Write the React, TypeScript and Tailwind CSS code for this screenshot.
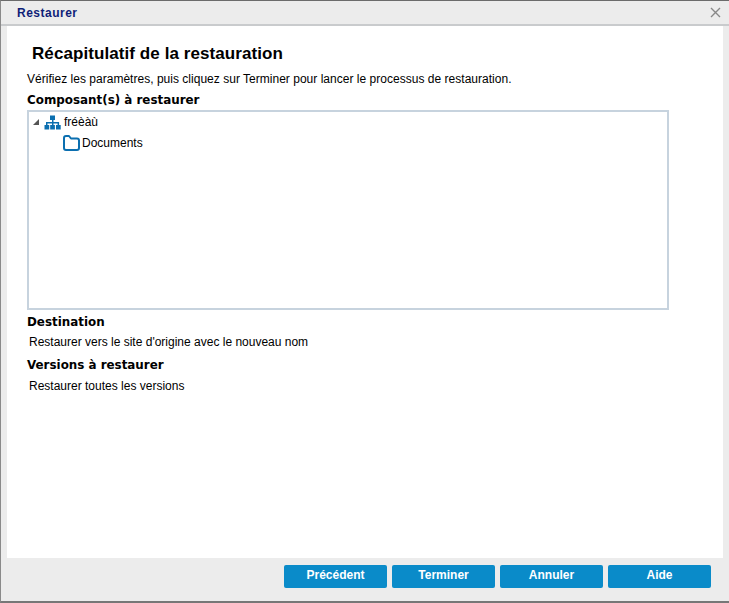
import React from "react";

const buttons = ["Précédent", "Terminer", "Annuler", "Aide"];

function OrgIcon() {
  return (
    <svg width="17" height="15" viewBox="0 0 17 15" className="shrink-0">
      <g fill="#0b6fb0">
        <rect x="6" y="0.5" width="5" height="4.5" />
        <rect x="8" y="5" width="1.5" height="3" />
        <rect x="2" y="7" width="13" height="1.5" />
        <rect x="2" y="7" width="1.5" height="3" />
        <rect x="13.6" y="7" width="1.5" height="3" />
        <rect x="8" y="7" width="1.5" height="3" />
        <rect x="0.5" y="10" width="4.7" height="4.5" />
        <rect x="6.2" y="10" width="4.7" height="4.5" />
        <rect x="12" y="10" width="4.7" height="4.5" />
      </g>
    </svg>
  );
}

function FolderIcon() {
  return (
    <svg width="17" height="16" viewBox="0 0 17 16" className="shrink-0">
      <path
        d="M1 3c0-1.2.8-2 2-2h3l2 2.5h6c1.2 0 2 .8 2 2V13c0 1.2-.8 2-2 2H3c-1.2 0-2-.8-2-2z"
        fill="#fff"
        stroke="#0b6fb0"
        strokeWidth="2"
        strokeLinejoin="round"
      />
    </svg>
  );
}

function SectionTitle({ children }: { children: React.ReactNode }) {
  return <h2 className="text-[11.9px] leading-4 font-bold text-black font-['DejaVu_Sans',sans-serif]">{children}</h2>;
}

export default function App() {
  return (
    <div className="w-[729px] h-[603px] flex flex-col bg-[#ececec] border-t border-b-2 border-l border-t-[#6b6b6b] border-b-[#777777] border-l-[#8a8a8a] font-['Liberation_Sans',sans-serif] overflow-hidden">
      <header className="h-[25px] shrink-0 flex items-center justify-between pl-4 pr-2 border-b-2 border-[#c9cbcd]">
        <span className="text-[12px] font-bold text-[#0f1f78] tracking-[0.5px]">Restaurer</span>
        <svg width="11" height="11" viewBox="0 0 11 11" fill="none" stroke="#888" strokeWidth="1.4">
          <path d="M1 1l9 9M10 1l-9 9" />
        </svg>
      </header>

      <main className="flex-1 mx-[6px] bg-white flex flex-col pl-5 pr-[54px] pt-[18px]">
        <h1 className="pl-[5px] text-[17px] leading-5 font-bold text-black tracking-[0.08px]">
          Récapitulatif de la restauration
        </h1>
        <p className="mt-[7px] text-[12px] leading-4 text-black tracking-[0.02px]">
          Vérifiez les paramètres, puis cliquez sur Terminer pour lancer le processus de restauration.
        </p>
        <div className="mt-[5px]">
          <SectionTitle>Composant(s) à restaurer</SectionTitle>
        </div>
        <div className="mt-[2px] h-[200px] border-2 border-[#c7d3de] text-[12px] text-black">
          <div className="flex items-center h-[20px] pl-[4px]">
            <span className="w-0 h-0 border-l-[6px] border-b-[6px] border-l-transparent border-b-[#555555]" />
            <span className="ml-[5px]">
              <OrgIcon />
            </span>
            <span className="ml-[3px]">fréèàù</span>
          </div>
          <div className="flex items-center h-[22px] pl-[34px]">
            <FolderIcon />
            <span className="ml-[2px]">Documents</span>
          </div>
        </div>
        <div className="mt-[4px]">
          <SectionTitle>Destination</SectionTitle>
        </div>
        <p className="mt-[4px] pl-[2px] text-[12px] leading-4 text-black">Restaurer vers le site d'origine avec le nouveau nom</p>
        <div className="mt-[7px]">
          <SectionTitle>Versions à restaurer</SectionTitle>
        </div>
        <p className="mt-[5px] pl-[2px] text-[12px] leading-4 text-black">Restaurer toutes les versions</p>
      </main>

      <footer className="h-[43px] shrink-0 flex justify-end gap-[5px] pt-[7px] pr-[18px]">
        {buttons.map((label) => (
          <button
            key={label}
            className="w-[103px] h-[23px] pb-[4px] rounded-[2px] bg-[#0a8bc9] text-white text-[12px] font-bold"
          >
            {label}
          </button>
        ))}
      </footer>
    </div>
  );
}
